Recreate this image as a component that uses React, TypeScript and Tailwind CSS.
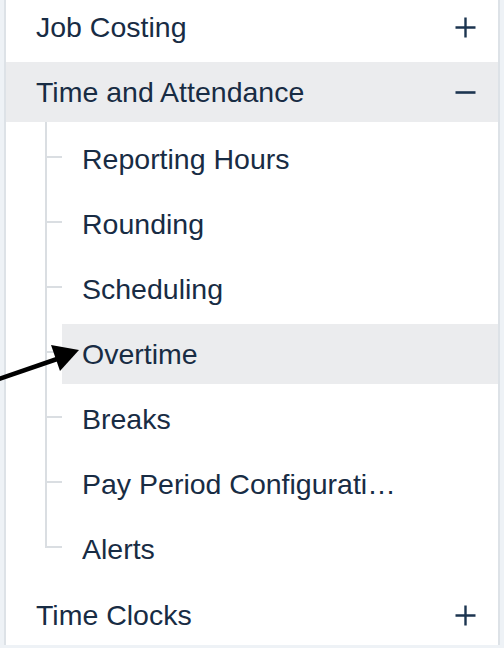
import type { ReactNode } from 'react';

/**
 * Settings side-nav: collapsible sections with a tree of sub-pages.
 * The arrow is an annotation drawn over the nav.
 */

const subItems = [
  'Reporting Hours',
  'Rounding',
  'Scheduling',
  'Overtime',
  'Breaks',
  'Pay Period Configuration',
  'Alerts',
];

const ACTIVE = 'Overtime';

function PlusIcon() {
  return (
    <svg width="21" height="21" viewBox="0 0 21 21" fill="none" aria-hidden>
      <path d="M10.5 0.5v20M0.5 10.5h20" stroke="#1c3550" strokeWidth="2.4" />
    </svg>
  );
}

function MinusIcon() {
  return (
    <svg width="21" height="21" viewBox="0 0 21 21" fill="none" aria-hidden>
      <path d="M0.5 10.5h20" stroke="#1c3550" strokeWidth="2.6" />
    </svg>
  );
}

function SectionRow({
  label,
  open,
  className = '',
}: {
  label: string;
  open?: boolean;
  className?: string;
}) {
  return (
    <div
      className={`flex h-[60px] items-center justify-between pl-[30px] pr-[22px] ${
        open ? 'bg-[#ebecee]' : ''
      } ${className}`}
    >
      <span>{label}</span>
      {open ? <MinusIcon /> : <PlusIcon />}
    </div>
  );
}

function SubRow({
  label,
  first,
  last,
}: {
  label: string;
  first?: boolean;
  last?: boolean;
}) {
  const active = label === ACTIVE;
  return (
    <div className="flex">
      {last ? (
        <div className="ml-[39px] h-[34px] w-[17px] shrink-0 border-b-2 border-l-2 border-[#dadee2]" />
      ) : (
        <div className="ml-[39px] w-[17px] shrink-0 border-l-2 border-[#dadee2]">
          <div className={first ? 'h-[34px]' : 'h-[32px]'} />
          <div className="h-[2px] w-full bg-[#dadee2]" />
        </div>
      )}
      <div className={`min-w-0 flex-1 ${first ? 'pt-[7px]' : 'pt-[5px]'}`}>
        <div
          className={`flex h-[60px] items-center pl-[20px] ${
            active ? 'bg-[#ebecee]' : ''
          }`}
        >
          <span className="block max-w-[314px] truncate">{label}</span>
        </div>
      </div>
    </div>
  );
}

function Annotation({ children }: { children: ReactNode }) {
  return <div className="pointer-events-none absolute inset-0">{children}</div>;
}

export default function App() {
  return (
    <div className="relative h-[648px] w-[504px] overflow-hidden bg-[#eef2f6] font-['Liberation_Sans',Arial,sans-serif] text-[28.5px] text-[#182c44]">
      <nav className="ml-[4px] h-full w-[496px] border-x-2 border-[#dde2e7] bg-white">
        <div className="-mt-[3px] flex flex-col">
          <SectionRow label="Job Costing" />
          <SectionRow label="Time and Attendance" open className="mt-[5px]" />
          <div className="flex flex-col pb-[6px]">
            {subItems.map((s, i) => (
              <SubRow
                key={s}
                label={s}
                first={i === 0}
                last={i === subItems.length - 1}
              />
            ))}
          </div>
          <SectionRow label="Time Clocks" />
        </div>
      </nav>

      <Annotation>
        <svg width="504" height="648" viewBox="0 0 504 648">
          <line x1="-4" y1="380" x2="60" y2="358" stroke="#000" strokeWidth="4.5" />
          <polygon points="79,350 51,345 60,371" fill="#000" />
        </svg>
      </Annotation>
    </div>
  );
}
